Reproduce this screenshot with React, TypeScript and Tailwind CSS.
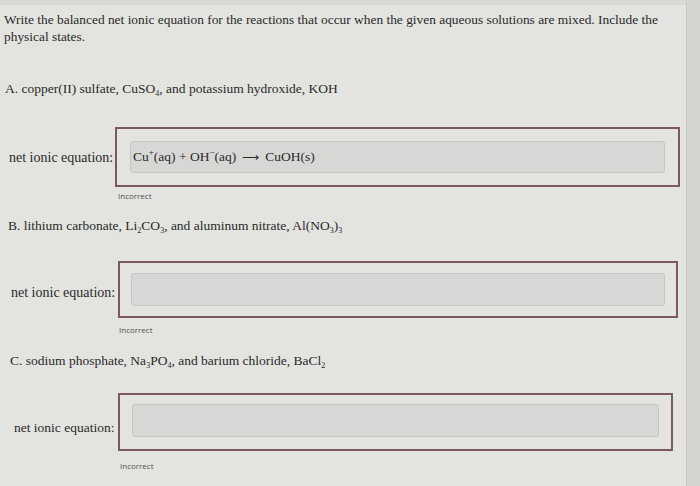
import React from "react";

const serif = { fontFamily: '"Liberation Serif", "Times New Roman", serif' };

function Sub({ children }: { children: React.ReactNode }) {
  return <sub className="text-[8px] relative top-[3px] align-baseline">{children}</sub>;
}
function Sup({ children }: { children: React.ReactNode }) {
  return <sup className="text-[9px] relative -top-[5px] align-baseline">{children}</sup>;
}

function Incorrect({ ml, mt }: { ml: string; mt: string }) {
  return (
    <div
      className={`${ml} ${mt} text-[8px] leading-[10px] text-[#505050]`}
      style={{ fontFamily: '"Open Sans", "Noto Sans", sans-serif' }}
    >
      Incorrect
    </div>
  );
}

export default function App() {
  return (
    <div className="w-[700px] h-[486px] bg-[#e3e4e0] flex overflow-hidden text-[#2a2a2a]" style={serif}>
      <div className="flex-1 flex flex-col">
        <div className="h-[5px] bg-[#d9dad6]" />
        <div className="pl-[4px] pr-[14px] pt-[6px] text-[13.4px] leading-[17px]">
          Write the balanced net ionic equation for the reactions that occur when the given aqueous solutions are mixed. Include the physical states.
        </div>

        <div className="pl-[5px] mt-[35px] text-[13.5px] leading-[17px]">
          A. copper(II) sulfate, CuSO<Sub>4</Sub>, and potassium hydroxide, KOH
        </div>

        <div className="flex items-center mt-[30px]">
          <div className="w-[115px] shrink-0 whitespace-nowrap pl-[9px] text-[14px]">net ionic equation:</div>
          <div className="w-[565px] h-[60px] border-2 border-[#7a5a5f] px-[13px] pt-[12px]">
            <div className="h-[32px] bg-[#d7d8d5] border border-[#c6c7c4] rounded-[3px] flex items-center pl-[2px] text-[13.5px]">
              Cu<Sup>+</Sup>(aq) + OH<Sup>−</Sup>(aq) <span className="mx-[6px] text-[12px]">⟶</span> CuOH(s)
            </div>
          </div>
        </div>
        <Incorrect ml="ml-[118px]" mt="mt-[4px]" />

        <div className="pl-[8px] mt-[16px] text-[13.5px] leading-[17px]">
          B. lithium carbonate, Li<Sub>2</Sub>CO<Sub>3</Sub>, and aluminum nitrate, Al(NO<Sub>3</Sub>)<Sub>3</Sub>
        </div>

        <div className="flex items-center mt-[27px]">
          <div className="w-[118px] shrink-0 whitespace-nowrap pl-[11px] pt-[6px] text-[14px]">net ionic equation:</div>
          <div className="w-[560px] h-[57px] border-2 border-[#7a5a5f] px-[11px] pt-[10px]">
            <div className="h-[33px] bg-[#d7d8d5] border border-[#c6c7c4] rounded-[3px]" />
          </div>
        </div>
        <Incorrect ml="ml-[119px]" mt="mt-[7px]" />

        <div className="pl-[10px] mt-[17px] text-[13.5px] leading-[17px]">
          C. sodium phosphate, Na<Sub>3</Sub>PO<Sub>4</Sub>, and barium chloride, BaCl<Sub>2</Sub>
        </div>

        <div className="flex items-center mt-[24px]">
          <div className="w-[118px] shrink-0 whitespace-nowrap pl-[14px] pt-[12px] text-[13.5px]">net ionic equation:</div>
          <div className="w-[555px] h-[58px] border-2 border-[#7a5a5f] px-[12px] pt-[9px]">
            <div className="h-[33px] bg-[#d7d8d5] border border-[#c6c7c4] rounded-[3px]" />
          </div>
        </div>
        <Incorrect ml="ml-[120px]" mt="mt-[10px]" />
      </div>
      <div className="w-[14px] bg-[#d4d5d1] border-l border-[#c9cac6]" />
    </div>
  );
}
